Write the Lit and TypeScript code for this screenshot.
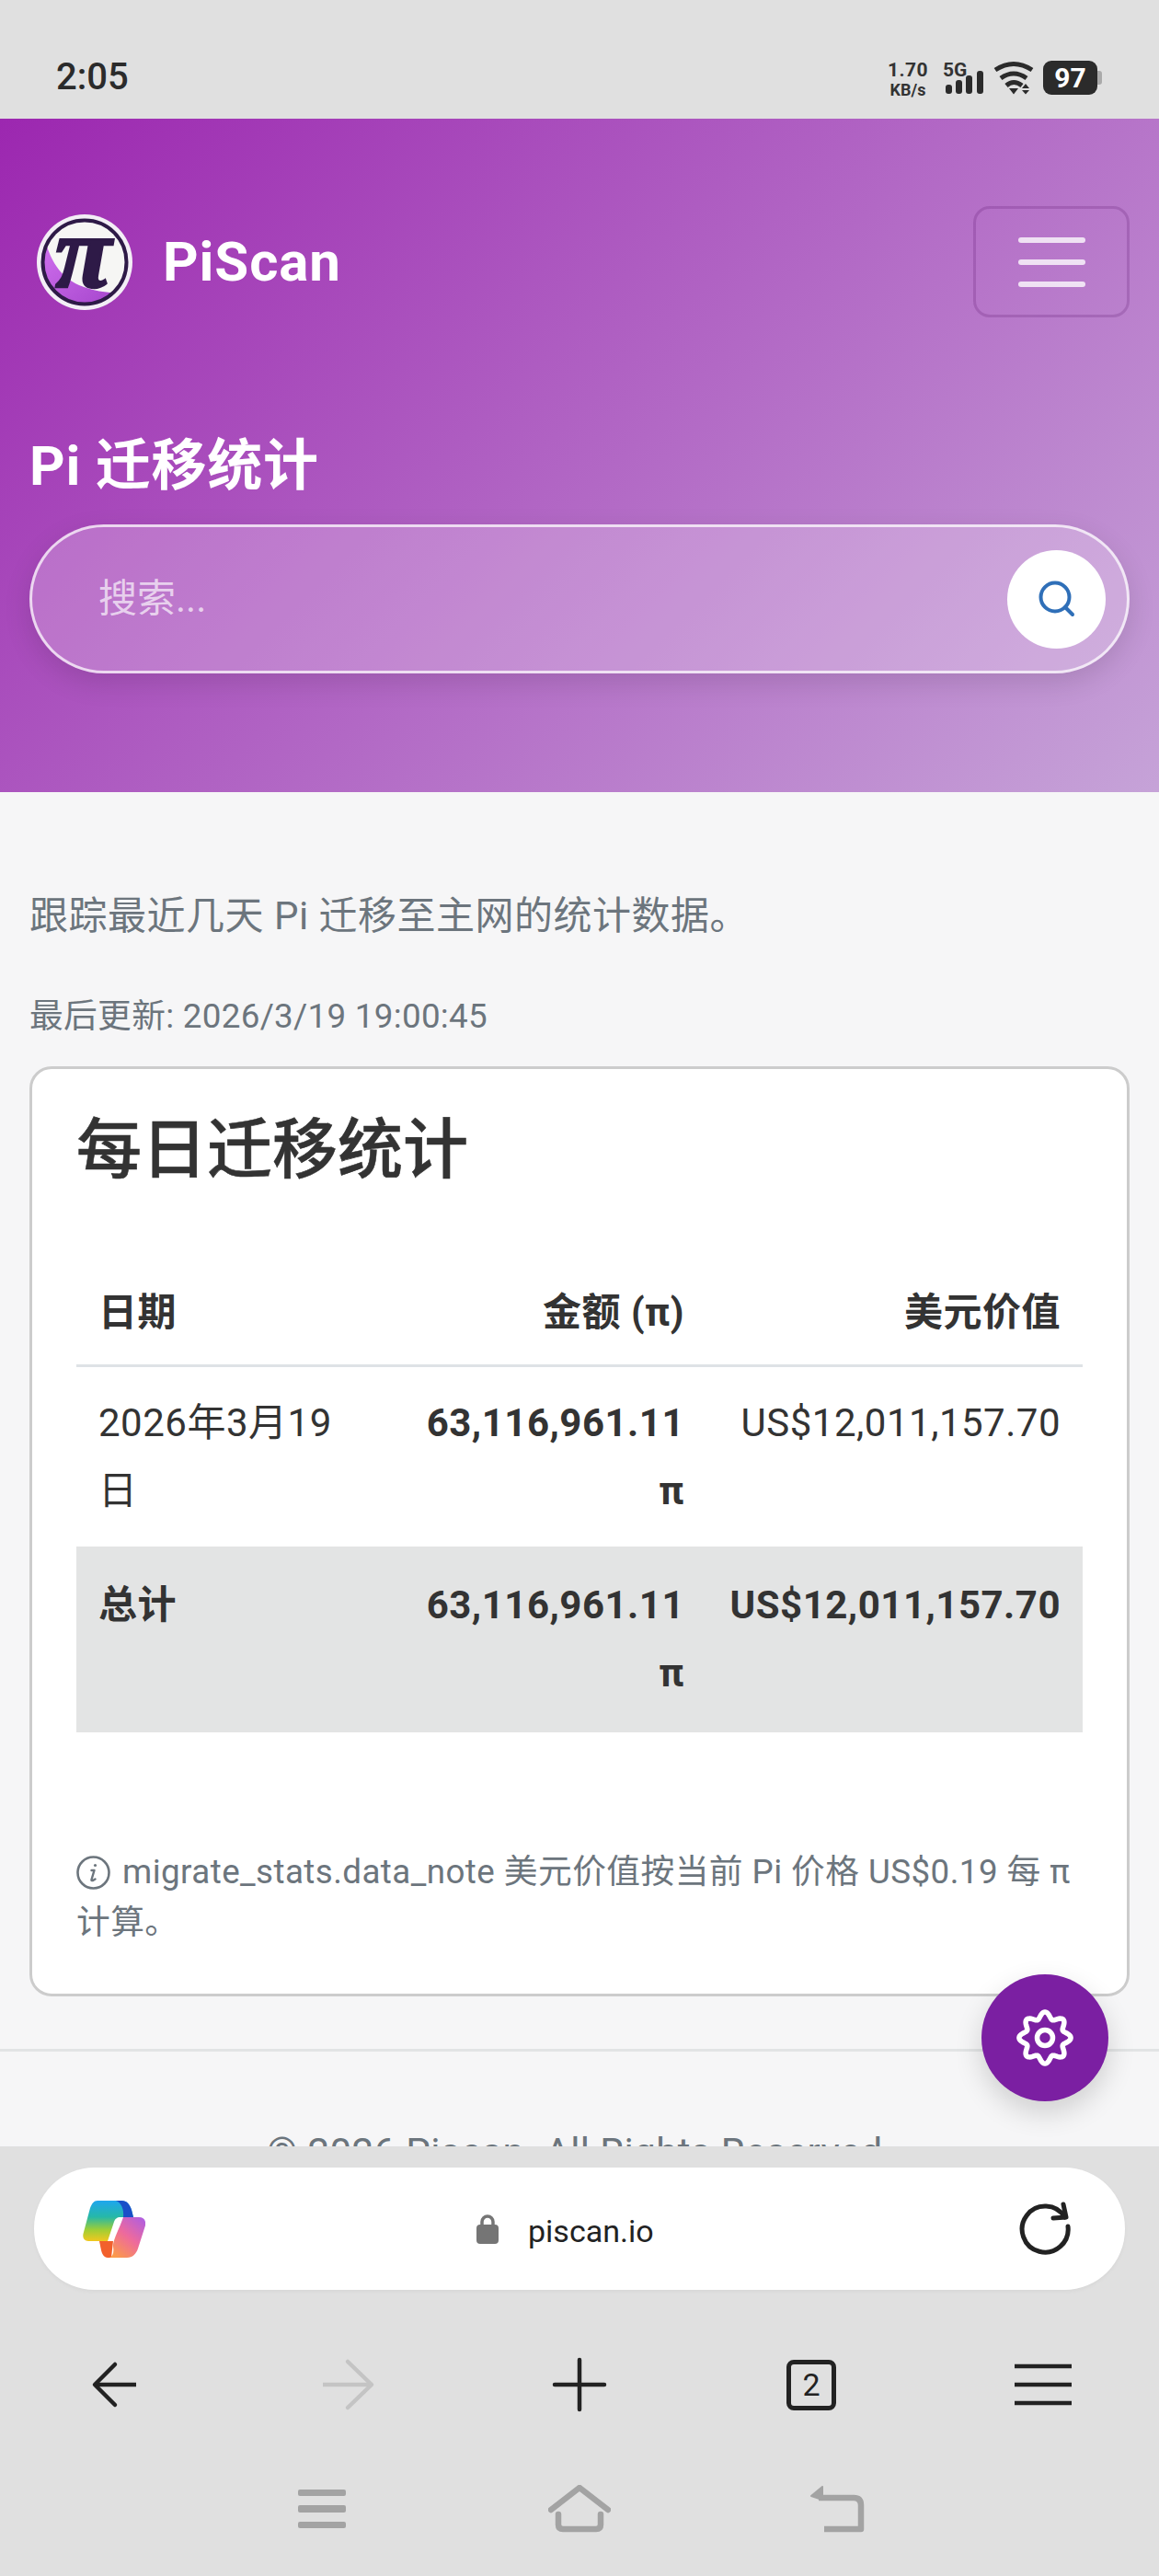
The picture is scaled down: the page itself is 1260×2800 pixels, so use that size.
import { LitElement, html, css } from "lit";
import { customElement } from "lit/decorators.js";

const gearPath = (() => {
  const pts: string[] = [];
  for (let i = 0; i < 160; i++) {
    const t = (i / 160) * Math.PI * 2;
    const r = 24.5 + 3.6 * Math.cos(8 * t);
    const x = 35 + r * Math.sin(t);
    const y = 35 - r * Math.cos(t);
    pts.push(`${i ? "L" : "M"}${x.toFixed(2)} ${y.toFixed(2)}`);
  }
  return pts.join(" ") + "Z";
})();

const rows = [
  { date: "2026年3月19日", amount: "63,116,961.11 π", usd: "US$12,011,157.70" },
];

@customElement("app-root")
export class AppRoot extends LitElement {
  static styles = css`
    :host {
      display: block;
      width: 1260px;
      height: 2800px;
      font-family: Roboto, "Noto Sans CJK SC", sans-serif;
      color: #333;
      overflow: hidden;
    }
    .page { display: flex; flex-direction: column; height: 2800px; }
    .status {
      height: 129px; flex: none; background: #e0e0e0; box-sizing: border-box;
      padding: 62px 62px 0 61px; display: flex; align-items: flex-start;
    }
    .time { font-size: 40px; line-height: 44px; font-weight: 500; color: #2b2b2b; }
    .sys { margin-left: auto; display: flex; align-items: flex-start; padding-top: 4px; }
    .speed { width: 40px; display: flex; flex-direction: column; align-items: center; font-weight: 700; color: #333; }
    .speed .a { font-size: 21px; line-height: 21px; letter-spacing: .5px; }
    .speed .b { font-size: 18px; line-height: 18px; margin-top: 2px; }
    .cell { display: grid; margin-left: 18px; width: 44px; }
    .cell > * { grid-area: 1 / 1; }
    .fiveg { font-size: 21px; line-height: 21px; font-weight: 700; color: #333; }
    .bars { margin: 11px 0 0 3px; display: block; }
    .wifi { display: block; margin-left: 11px; }
    .batt { margin-left: 10px; display: flex; align-items: center; }
    .batt-body {
      width: 59px; height: 37px; background: #2b2b2b; border-radius: 9px; color: #fff;
      font-size: 30px; line-height: 37px; font-weight: 700; text-align: center;
    }
    .batt-nub { width: 5px; height: 15px; background: #aaa; border-radius: 0 3px 3px 0; }

    .view { flex: 1; min-height: 0; position: relative; overflow: hidden; background: #f6f6f7; }
    .hero {
      background: linear-gradient(135deg, #9c27b0, #c6a3d8);
      padding: 95px 32px 128px; box-sizing: border-box; height: 732px; color: #fff;
    }
    .nav { display: flex; align-items: center; justify-content: space-between; height: 121px; }
    .brand { display: flex; align-items: center; gap: 33px; padding-left: 8px; font-size: 60px; font-weight: 700; letter-spacing: .9px; }
    .brand svg { display: block; }
    .toggler {
      width: 170px; height: 121px; box-sizing: border-box; border: 3px solid rgba(70, 0, 90, .18);
      border-radius: 18px; display: flex; flex-direction: column; align-items: center; justify-content: center; gap: 18px;
    }
    .toggler span { width: 73px; height: 6px; border-radius: 3px; background: rgba(255, 255, 255, .78); }
    h1 { margin: 126px 0 27px; font-size: 60px; line-height: 72px; font-weight: 700; letter-spacing: .75px; }
    .search {
      height: 162px; box-sizing: border-box; border: 3px solid rgba(255, 255, 255, .72); border-radius: 81px;
      background: rgba(255, 255, 255, .22); box-shadow: 0 10px 30px rgba(0, 0, 0, .12);
      display: flex; align-items: center; justify-content: space-between; padding: 0 23px 0 72px;
    }
    .ph { font-size: 42px; color: rgba(255, 255, 255, .68); padding-bottom: 10px; }
    .go { width: 107px; height: 107px; border-radius: 50%; background: #fff; display: flex; align-items: center; justify-content: center; }

    main { padding: 98px 32px 0; }
    .lead { margin: 0 0 40px; font-size: 42px; line-height: 73.5px; color: #6c757d; letter-spacing: .5px; }
    .upd { margin: 0 0 22px; font-size: 36.75px; line-height: 64px; color: #6c757d; letter-spacing: .3px; }
    .card {
      background: #fff; border: 3px solid #ccc; border-radius: 24px; height: 1011px; box-sizing: border-box;
      padding: 45px 48px 0;
    }
    h2 { margin: 0 0 69px; font-size: 71px; line-height: 86px; font-weight: 500; color: #333; -webkit-text-stroke: .6px #333; }
    table { width: 1094px; border-collapse: collapse; table-layout: fixed; font-size: 42px; line-height: 73.5px; color: #333; letter-spacing: .5px; }
    th, td { padding: 24px; vertical-align: top; text-align: right; font-weight: 400; }
    th:first-child, td:first-child { text-align: left; }
    thead th { font-weight: 700; border-bottom: 3px solid #dee2e6; padding: 28.5px 24px 19.5px; }
    .strong { font-weight: 700; }
    .total td { background: #e3e4e4; font-weight: 700; padding: 27px 24px 28px; }
    .nb { white-space: nowrap; }
    .note { margin: 123.5px 0 0; font-size: 36.75px; line-height: 55px; color: #6c757d; letter-spacing: .43px; }
    .note svg { vertical-align: -7px; margin-right: 13px; }
    hr { border: 0; height: 3px; background: #e2e4e5; margin: 57px 0 0; }
    footer { text-align: center; font-size: 42px; line-height: 60px; color: #6c757d; padding: 80px 10px 0 0; letter-spacing: .4px; }
    .fab {
      position: absolute; left: 1067px; top: 2017px; width: 138px; height: 138px; border-radius: 50%;
      background: #7b1fa2; box-shadow: 0 12px 30px rgba(0, 0, 0, .16);
      display: flex; align-items: center; justify-content: center;
    }

    .chrome { height: 467px; flex: none; background: #e0e0e0; box-sizing: border-box; padding-top: 23px; }
    .url {
      margin: 0 37px; height: 133px; background: #fff; border-radius: 66px; display: flex; align-items: center;
      padding: 0 57px 0 53px; box-shadow: 0 2px 4px rgba(0, 0, 0, .04);
    }
    .addr { display: flex; align-items: center; gap: 32px; margin-left: 360px; font-size: 34px; color: #222; }
    .addr span { padding-top: 5px; }
    .reload { margin-left: auto; display: block; }
    .tools { margin-top: 43px; height: 120px; display: grid; grid-template-columns: repeat(5, 252px); }
    .tools > div { display: flex; align-items: center; justify-content: center; }
    .tab {
      width: 54px; height: 55px; box-sizing: border-box; border: 5px solid #222; border-radius: 8px;
      font-size: 34px; line-height: 45px; text-align: center; color: #222;
    }
    .sysnav { height: 150px; display: grid; grid-template-columns: repeat(3, 280px); justify-content: center; }
    .sysnav > div { display: flex; align-items: center; justify-content: center; }
    .lines { display: flex; flex-direction: column; gap: 10px; }
    .lines span { width: 52px; height: 7.5px; border-radius: 2px; background: #a3a3a3; }
  `;

  private logo() {
    return html`<svg width="104" height="104" viewBox="0 0 104 104">
      <defs>
        <clipPath id="in"><circle cx="52" cy="52" r="45" /></clipPath>
        <linearGradient id="sw" x1="0" y1="0" x2="1" y2="1">
          <stop offset="0" stop-color="#d070ee" /><stop offset="1" stop-color="#a040c8" />
        </linearGradient>
      </defs>
      <circle cx="52" cy="52" r="52" fill="#f3eef6" />
      <circle cx="52" cy="52" r="45" fill="#f6f6f4" />
      <path clip-path="url(#in)" fill="url(#sw)" d="M11 35 C17 52 26 68 46 77 C60 83 75 85 92 86 L92 110 L0 110 L0 35Z" />
      <circle cx="52" cy="52" r="45.5" fill="none" stroke="#2e1a47" stroke-width="4" />
      <text x="51" y="79" text-anchor="middle" font-family="'Liberation Serif', serif" font-style="italic" font-size="112" fill="#2e1a47" stroke="#2e1a47" stroke-width="2.5">π</text>
    </svg>`;
  }

  private copilot() {
    return html`<svg width="68" height="62" viewBox="0 0 68 62">
      <defs>
        <linearGradient id="c1" x1="0" y1="0" x2="0" y2="1">
          <stop offset="0" stop-color="#1fa6ee" /><stop offset=".4" stop-color="#26b8a8" />
          <stop offset=".72" stop-color="#9fce35" /><stop offset="1" stop-color="#f2c81e" />
        </linearGradient>
        <linearGradient id="c2" x1="0.9" y1="0" x2="0.2" y2="1">
          <stop offset="0" stop-color="#b05ee0" /><stop offset=".5" stop-color="#ee6a9c" />
          <stop offset="1" stop-color="#fb9a4a" />
        </linearGradient>
      </defs>
      <path fill="#f2602c" d="M18 44 H33 L31 62 H27 C23 62 21 58 20 54Z" />
      <path fill="url(#c1)" d="M16 0 H42 C48 0 51 4 53 10 L55 18 H41 C37 18 35 20 34 23 L27 44 H6 C2 44 -.5 41 .5 36 L8 8 C10 3 12 0 16 0Z" />
      <path fill="#1a4fc8" d="M36 0 H42 C48 0 51 4 53 10 L55 18 H44 C45 10 42 2 36 0Z" />
      <path fill="url(#c2)" d="M44 18 H61 C66 18 69 21 68 27 L60 52 C58 58 54 62 48 62 H29 C33 60 34 56 33 50 C32 44 40 30 44 18Z" />
    </svg>`;
  }

  render() {
    return html`<div class="page">
      <div class="status">
        <div class="time">2:05</div>
        <div class="sys">
          <div class="speed"><span class="a">1.70</span><span class="b">KB/s</span></div>
          <div class="cell">
            <span class="fiveg">5G</span>
            <svg class="bars" width="41" height="25" viewBox="0 0 41 25" fill="#2b2b2b">
              <rect x="0" y="15" width="7" height="10" rx="3" /><rect x="11" y="10" width="7" height="15" rx="3" />
              <rect x="22" y="5" width="7" height="20" rx="3" /><rect x="34" y="0" width="7" height="25" rx="3" />
            </svg>
          </div>
          <svg class="wifi" width="44" height="37" viewBox="0 0 44 37" fill="none" stroke="#2b2b2b" stroke-width="5">
            <path d="M2 10 Q22 -3 42 10" /><path d="M8 19 Q22 9 36 19" /><path d="M14 27 Q22 20 31 27" />
            <path stroke="none" fill="#2b2b2b" d="M17 30 H27 L22 36.5Z M35 25 L39 30 H31Z M31 32 H39 L35 36.5Z" />
          </svg>
          <div class="batt"><div class="batt-body">97</div><div class="batt-nub"></div></div>
        </div>
      </div>

      <div class="view">
        <section class="hero">
          <div class="nav">
            <div class="brand">${this.logo()}<span>PiScan</span></div>
            <div class="toggler"><span></span><span></span><span></span></div>
          </div>
          <h1>Pi 迁移统计</h1>
          <div class="search">
            <span class="ph">搜索...</span>
            <div class="go">
              <svg width="40" height="40" viewBox="0 0 40 40" fill="none" stroke="#2f6fb8" stroke-width="4" stroke-linecap="round">
                <circle cx="18" cy="18" r="15.5" /><path d="M29 29 L37 37" />
              </svg>
            </div>
          </div>
        </section>
        <main>
          <p class="lead">跟踪最近几天 Pi 迁移至主网的统计数据。</p>
          <p class="upd">最后更新: 2026/3/19 19:00:45</p>
          <div class="card">
            <h2>每日迁移统计</h2>
            <table>
              <colgroup><col style="width:337px" /><col style="width:348px" /><col style="width:409px" /></colgroup>
              <thead><tr><th>日期</th><th>金额 (π)</th><th>美元价值</th></tr></thead>
              <tbody>
                ${rows.map(
                  (r) => html`<tr><td>${r.date}</td><td class="strong">${r.amount}</td><td class="nb">${r.usd}</td></tr>`
                )}
                <tr class="total"><td>总计</td><td>${rows[0].amount}</td><td class="nb">${rows[0].usd}</td></tr>
              </tbody>
            </table>
            <p class="note"><svg width="37" height="37" viewBox="0 0 37 37" fill="none" stroke="#6c757d"><circle cx="18.5" cy="18.5" r="17" stroke-width="2.6" /><circle cx="20.5" cy="10.5" r="1.6" fill="#6c757d" stroke="none" /><path d="M16.5 16 H19.5 L16.5 26 Q16.2 27.5 18 27 L20.5 25.5" stroke-width="2.4" stroke-linecap="round" stroke-linejoin="round" /></svg>migrate_stats.data_note 美元价值按当前 Pi 价格 US$0.19 每 π 计算。</p>
          </div>
        </main>
        <hr />
        <footer>© 2026 Piscan. All Rights Reserved</footer>
        <div class="fab">
          <svg width="70" height="70" viewBox="0 0 70 70" fill="none" stroke="#fff" stroke-width="5.5">
            <path d=${gearPath} stroke-linejoin="round" /><circle cx="35" cy="35" r="8.5" />
          </svg>
        </div>
      </div>

      <div class="chrome">
        <div class="url">
          ${this.copilot()}
          <div class="addr">
            <svg width="24" height="32" viewBox="0 0 24 32" fill="#757575">
              <rect x="0" y="11" width="24" height="21" rx="4" />
              <path d="M6 12 V8 a6 6 0 0 1 12 0 V12" fill="none" stroke="#757575" stroke-width="3.5" />
            </svg>
            <span>piscan.io</span>
          </div>
          <svg class="reload" width="60" height="60" viewBox="0 0 60 60" fill="none" stroke="#222" stroke-width="5" stroke-linecap="round" stroke-linejoin="round">
            <path d="M55 27 A25 25 0 1 1 51.5 17" /><path d="M50 3 L53 17 L39 18" />
          </svg>
        </div>
        <div class="tools">
          <div><svg width="60" height="60" viewBox="0 0 60 60" fill="none" stroke="#222" stroke-width="4.5" stroke-linejoin="round"><path d="M52 30 H7" /><path d="M29 8 L7 30 L29 52" stroke-linecap="round" /></svg></div>
          <div><svg width="60" height="60" viewBox="0 0 60 60" fill="none" stroke="#c4c4c4" stroke-width="4.5" stroke-linejoin="round"><path d="M3 30 H56" /><path d="M30 5 L56 30 L30 55" stroke-linecap="round" /></svg></div>
          <div><svg width="60" height="60" viewBox="0 0 60 60" fill="none" stroke="#222" stroke-width="4.5" stroke-linecap="round"><path d="M3 30 H57 M30 3 V57" /></svg></div>
          <div><div class="tab">2</div></div>
          <div><svg width="62" height="46" viewBox="0 0 62 46" fill="none" stroke="#222" stroke-width="4.5"><path d="M0 3 H62 M0 23 H62 M0 43 H62" /></svg></div>
        </div>
        <div class="sysnav">
          <div><div class="lines"><span></span><span></span><span></span></div></div>
          <div><svg width="68" height="52" viewBox="0 0 68 52" fill="none" stroke="#a3a3a3" stroke-width="6.5" stroke-linecap="round" stroke-linejoin="round"><path d="M3 27 L34 3 L65 27" /><path d="M11 32 V43 Q11 48 16 48 H52 Q57 48 57 43 V32" /></svg></div>
          <div><svg width="60" height="52" viewBox="0 0 60 52" fill="none" stroke="#a3a3a3" stroke-width="6.5" stroke-linejoin="round"><path d="M10 14 H48 Q56 14 56 22 V48 H16" /><path d="M2 12 L14 2 L14 16 Z" fill="#a3a3a3" stroke-width="2" /></svg></div>
        </div>
      </div>
    </div>`;
  }
}
